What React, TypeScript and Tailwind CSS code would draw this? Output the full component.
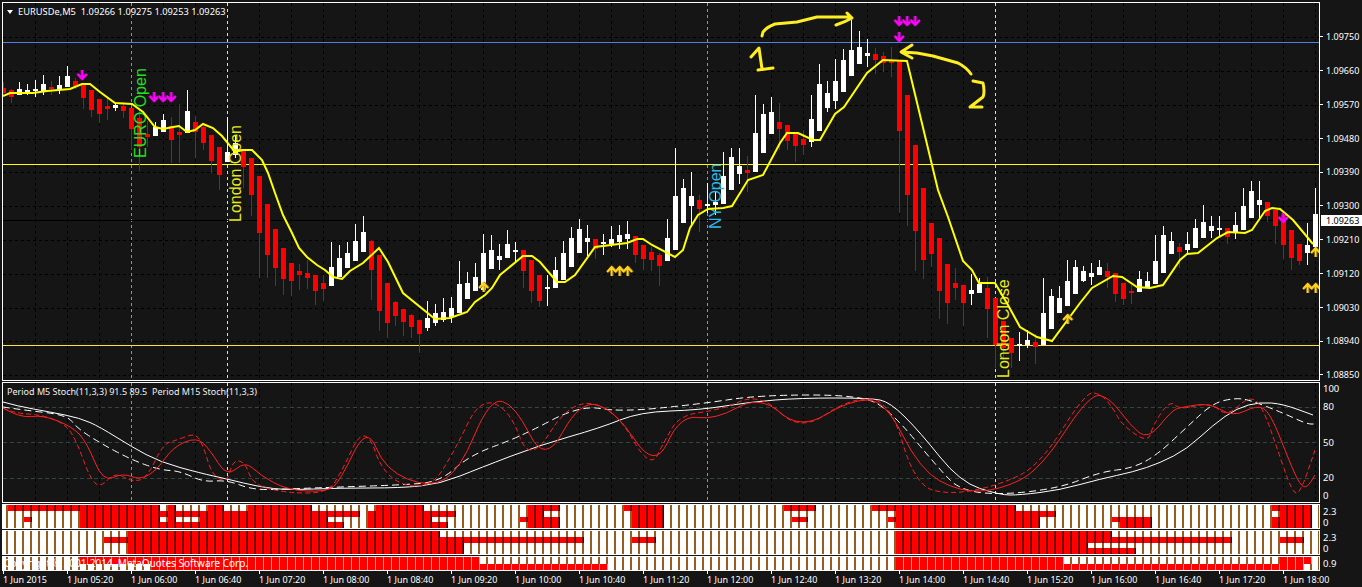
// EURUSD M5 chart, values below are in page pixels
type Candle = [number, number, number, number, number]

const CANDLES: Candle[] = [
  [82, 88, 93, 96, 0], [89, 90, 97, 103, 0], [82, 89, 95, 95, 1], [84, 90, 92, 95, 1], [80, 89, 91, 97, 1],
  [75, 84, 92, 95, 1], [81, 87, 89, 95, 0], [76, 85, 89, 94, 1], [66, 76, 87, 87, 1], [78, 81, 86, 89, 0],
  [84, 84, 98, 109, 0], [90, 90, 110, 117, 0], [99, 99, 114, 123, 0], [98, 106, 109, 120, 0], [104, 105, 108, 111, 1],
  [102, 106, 111, 118, 0], [108, 108, 129, 150, 0], [110, 118, 147, 171, 0], [121, 134, 137, 147, 0], [122, 127, 136, 136, 1],
  [114, 120, 132, 132, 1], [117, 126, 140, 163, 0], [104, 132, 135, 163, 0], [90, 111, 133, 133, 1], [116, 122, 132, 158, 0],
  [126, 127, 143, 150, 0], [135, 135, 161, 173, 0], [147, 147, 175, 190, 0], [117, 152, 162, 162, 1], [135, 143, 155, 158, 1],
  [150, 151, 167, 188, 0], [158, 158, 195, 216, 0], [176, 176, 233, 278, 0], [204, 204, 255, 278, 0], [229, 229, 268, 286, 0],
  [248, 248, 279, 295, 0], [263, 263, 281, 296, 0], [264, 271, 275, 290, 0], [260, 273, 278, 289, 0], [275, 275, 291, 305, 0],
  [275, 283, 289, 301, 0], [242, 267, 286, 286, 1], [245, 258, 277, 277, 1], [242, 253, 268, 268, 1], [224, 241, 261, 261, 1],
  [216, 232, 252, 252, 1], [240, 241, 270, 300, 0], [255, 255, 311, 331, 0], [283, 283, 323, 338, 0], [301, 302, 316, 326, 0],
  [309, 309, 322, 336, 0], [314, 315, 327, 338, 0], [320, 320, 334, 353, 0], [301, 318, 328, 331, 1], [304, 313, 323, 326, 1],
  [298, 312, 320, 322, 1], [297, 308, 317, 323, 1], [261, 284, 313, 313, 1], [272, 283, 299, 299, 1], [263, 277, 291, 291, 1],
  [234, 253, 290, 290, 1], [235, 250, 269, 269, 1], [244, 256, 260, 270, 1], [230, 244, 258, 258, 1], [242, 250, 252, 262, 1],
  [250, 250, 271, 288, 0], [260, 260, 291, 303, 0], [275, 275, 301, 307, 0], [275, 287, 289, 306, 1], [257, 270, 288, 288, 1],
  [241, 253, 280, 280, 1], [227, 238, 267, 267, 1], [219, 229, 253, 253, 1], [225, 238, 242, 256, 1], [239, 239, 249, 259, 0],
  [234, 242, 244, 255, 1], [226, 239, 244, 247, 1], [225, 235, 242, 249, 1], [221, 234, 239, 249, 1], [236, 236, 255, 263, 0],
  [245, 245, 259, 270, 0], [247, 252, 260, 271, 0], [253, 255, 266, 286, 0], [219, 238, 261, 261, 1], [148, 196, 250, 250, 1],
  [179, 188, 223, 223, 1], [172, 196, 206, 225, 1], [195, 200, 209, 232, 0], [183, 204, 206, 213, 1], [192, 202, 205, 215, 1],
  [152, 176, 204, 204, 1], [148, 157, 190, 190, 1], [148, 166, 174, 184, 1], [156, 170, 173, 192, 0], [95, 133, 172, 172, 1],
  [104, 114, 153, 153, 1], [97, 112, 134, 134, 1], [103, 122, 129, 150, 0], [125, 125, 141, 150, 0], [133, 133, 146, 162, 0],
  [130, 139, 145, 155, 0], [95, 119, 142, 147, 1], [64, 84, 131, 131, 1], [81, 93, 108, 112, 1], [59, 81, 101, 109, 1],
  [49, 60, 92, 92, 1], [20, 50, 76, 76, 1], [31, 47, 64, 64, 1], [39, 53, 56, 67, 1], [48, 54, 60, 74, 0],
  [52, 56, 63, 72, 0], [47, 60, 63, 77, 0], [61, 61, 131, 213, 0], [95, 95, 195, 226, 0], [145, 145, 231, 271, 0],
  [188, 188, 260, 279, 0], [223, 223, 254, 267, 0], [238, 238, 291, 319, 0], [264, 264, 303, 324, 0], [268, 283, 288, 300, 0],
  [285, 285, 303, 326, 0], [274, 290, 294, 305, 1], [278, 284, 293, 293, 1], [277, 288, 309, 338, 0], [298, 298, 345, 368, 0],
  [321, 321, 348, 360, 0], [338, 338, 353, 368, 0], [332, 344, 345, 361, 1], [330, 340, 345, 348, 1], [334, 342, 347, 364, 0],
  [278, 313, 345, 345, 1], [289, 296, 329, 329, 1], [286, 298, 313, 313, 1], [260, 281, 306, 306, 1], [260, 267, 294, 294, 1],
  [266, 271, 281, 282, 1], [263, 273, 277, 285, 1], [260, 267, 275, 275, 1], [263, 271, 277, 288, 0], [273, 273, 294, 302, 0],
  [283, 283, 299, 305, 0], [285, 291, 293, 304, 0], [271, 279, 292, 292, 1], [272, 281, 287, 288, 1], [235, 261, 284, 284, 1],
  [226, 235, 273, 273, 1], [232, 241, 254, 254, 1], [243, 247, 252, 268, 0], [232, 244, 250, 255, 1], [219, 228, 248, 248, 1],
  [205, 222, 238, 238, 1], [216, 226, 231, 238, 1], [216, 228, 229, 237, 1], [228, 228, 237, 244, 0], [212, 225, 232, 239, 1],
  [188, 206, 230, 230, 1], [181, 191, 218, 218, 1], [181, 200, 205, 220, 1], [202, 202, 216, 222, 0], [210, 210, 226, 244, 0],
  [215, 215, 245, 259, 0], [230, 230, 258, 270, 0], [244, 244, 261, 265, 0], [223, 245, 253, 265, 1], [188, 214, 247, 247, 1],
]

const MA =
  '3,96 10,93 33,93 47,91 70,89 82,84 90,84 100,92 115,103 132,104 143,112 155,127 163,129 173,127 179,126 187,132 195,130 203,124 213,128 222,136 235,152 243,150 252,150 262,160 268,173 275,193 283,215 292,233 299,248 307,257 317,265 325,270 333,277 342,279 350,271 363,263 379,248 388,262 403,293 435,319 450,318 467,312 475,302 485,295 492,288 500,275 523,256 532,256 540,262 557,282 565,282 575,275 595,247 627,243 637,239 643,239 652,245 675,257 683,250 690,228 698,215 708,209 723,208 732,206 748,180 763,175 780,143 787,133 798,133 813,140 820,140 835,114 844,107 867,73 883,60 907,61 938,190 948,217 963,261 972,270 979,283 995,283 1008,305 1020,327 1037,337 1052,341 1080,303 1092,288 1113,276 1122,277 1137,287 1150,288 1163,285 1180,260 1187,254 1198,253 1217,238 1228,232 1245,233 1252,230 1265,211 1272,208 1280,209 1293,220 1313,244'

const WHITE_K =
  '3,402 17,406 50,412 80,418 100,427 132,447 160,462 200,473 227,479 260,487 287,490 340,488 400,488 440,484 480,468 540,445 600,428 640,412 700,410 750,402 800,398 870,398 890,402 920,432 960,482 1000,495 1020,495 1060,490 1100,479 1133,472 1160,463 1187,449 1213,425 1237,408 1260,402 1283,404 1313,415'
const WHITE_D =
  '3,407 23,410 67,415 77,428 100,443 132,460 160,470 180,471 203,482 227,480 253,490 287,489 340,487 400,485 440,482 470,455 520,437 580,405 620,412 700,404 760,395 860,395 890,410 940,470 960,490 1000,495 1060,488 1100,472 1133,468 1157,455 1187,427 1213,403 1235,398 1250,400 1283,413 1307,424 1315,424'
const RED_K =
  '3,408 20,418 43,415 73,427 87,443 103,482 123,473 140,480 157,470 173,447 197,437 210,450 227,477 245,461 260,475 287,490 327,492 340,481 367,425 385,470 430,488 460,470 490,398 515,405 545,465 580,400 615,410 655,470 680,415 715,420 760,395 800,430 850,400 885,400 920,470 960,492 1000,490 1040,470 1090,393 1110,398 1130,425 1148,440 1172,410 1183,407 1210,403 1233,417 1257,405 1270,412 1290,463 1300,485 1307,488 1315,475'
const RED_D =
  '3,408 13,413 43,415 67,425 78,445 90,478 100,488 115,472 132,482 147,478 163,444 177,440 195,433 203,445 212,475 227,483 233,460 245,462 253,485 287,493 327,493 340,475 365,422 385,480 430,490 455,450 480,398 510,410 530,465 570,400 615,408 650,470 665,440 680,415 720,410 760,393 800,432 850,398 890,400 915,485 950,495 1000,485 1040,465 1085,393 1100,393 1113,408 1122,425 1148,443 1153,425 1170,400 1180,410 1210,402 1227,417 1250,395 1263,408 1277,448 1292,492 1300,494 1315,450'

const R = 'RRRR'
const W = 'WWWW'
const T = 'WRRR'
const S = 'WRWR'
type Run = [number, number, string]

const STRIP_1: Run[] = [
  [0, 0, W], [1, 2, 'RWWW'], [3, 3, 'RWRW'], [4, 9, 'RWWW'], [10, 19, R], [20, 20, S], [21, 21, R], [22, 24, S], [25, 25, T],
  [26, 27, R], [28, 30, T], [31, 38, R], [39, 40, T], [41, 42, S], [43, 44, 'WRWW'], [45, 45, W], [46, 46, T], [47, 52, R],
  [53, 53, T], [54, 55, S], [56, 56, 'WRWW'], [57, 64, W], [65, 65, 'WWRW'], [66, 67, R], [68, 69, 'RWRR'], [70, 77, W],
  [78, 78, 'RWWW'], [79, 82, R], [83, 97, W], [98, 98, 'RWWW'], [99, 100, 'RWRW'], [101, 101, 'RWWW'], [102, 108, W],
  [109, 110, 'RWWW'], [111, 111, 'RWRW'], [112, 126, R], [127, 129, T], [130, 131, 'WRWW'], [132, 138, W], [139, 139, 'WWRW'],
  [140, 143, 'WWRR'], [144, 158, W], [159, 159, 'RWRR'], [160, 163, R], [164, 164, W],
]
const STRIP_2: Run[] = [
  [0, 12, W], [13, 15, 'WRWW'], [16, 54, R], [55, 57, T], [58, 72, 'WRWW'], [73, 78, W], [79, 81, 'WRWW'], [82, 111, W],
  [112, 135, R], [136, 138, 'RRWR'], [139, 141, S], [142, 153, 'WRWW'], [154, 159, W], [160, 162, 'WRWW'], [163, 164, W],
]
const STRIP_3: Run[] = [
  [0, 9, 'WW'], [10, 18, 'RW'], [19, 59, 'RR'], [60, 75, 'WR'], [76, 111, 'WW'], [112, 132, 'RR'], [133, 159, 'WR'],
  [160, 162, 'RR'], [163, 163, 'RW'], [164, 164, 'WW'],
]

const PRICES = ['1.09750', '1.09660', '1.09570', '1.09480', '1.09390', '1.09300', '1.09210', '1.09120', '1.09030', '1.08940', '1.08850']
const TIMES = ['1 Jun 2015', '1 Jun 05:20', '1 Jun 06:00', '1 Jun 06:40', '1 Jun 07:20', '1 Jun 08:00', '1 Jun 08:40', '1 Jun 09:20', '1 Jun 10:00', '1 Jun 10:40', '1 Jun 11:20', '1 Jun 12:00', '1 Jun 12:40', '1 Jun 13:20', '1 Jun 14:00', '1 Jun 14:40', '1 Jun 15:20', '1 Jun 16:00', '1 Jun 16:40', '1 Jun 17:20', '1 Jun 18:00']
const SESSIONS = [
  { x: 131, color: '#22dd22' },
  { x: 227, color: '#ffe84a' },
  { x: 707, color: '#2bb8e8' },
  { x: 995, color: '#ffe84a' },
]

const gridX = Array.from({ length: 41 }, (_, i) => 35 + i * 32)

// rounds the corners of a point list, the stochastic lines are curves
function smooth(points: string) {
  const pts = points.split(' ').map((p) => p.split(',').map(Number))
  let d = `M${pts[0][0]} ${pts[0][1]}`
  for (let i = 1; i < pts.length - 1; i++) {
    const mx = (pts[i][0] + pts[i + 1][0]) / 2
    const my = (pts[i][1] + pts[i + 1][1]) / 2
    d += ` Q${pts[i][0]} ${pts[i][1]} ${mx} ${my}`
  }
  const last = pts[pts.length - 1]
  return `${d} L${last[0]} ${last[1]}`
}

function VGrid({ y1, y2 }: { y1: number; y2: number }) {
  return (
    <g stroke="#000" strokeDasharray="3 3" shapeRendering="crispEdges">
      {gridX.map((x) => (
        <line key={x} x1={x + 0.5} x2={x + 0.5} y1={y1} y2={y2} />
      ))}
    </g>
  )
}

function SessionLines({ y1, y2 }: { y1: number; y2: number }) {
  return (
    <g strokeDasharray="3 3" shapeRendering="crispEdges">
      {SESSIONS.map((s) => (
        <line key={s.x} x1={s.x + 0.5} x2={s.x + 0.5} y1={y1} y2={y2} stroke={s.color} />
      ))}
    </g>
  )
}

function DownArrow({ x, y }: { x: number; y: number }) {
  return (
    <g fill="none" strokeWidth="2">
      <path d={`M${x + 0.5} ${y} V${y + 9} M${x - 4} ${y + 4} L${x + 0.5} ${y + 9} L${x + 5} ${y + 4}`} stroke="#a0109a" transform="translate(-1 0)" />
      <path d={`M${x + 0.5} ${y} V${y + 9} M${x - 4} ${y + 4} L${x + 0.5} ${y + 9} L${x + 5} ${y + 4}`} stroke="#ff00ff" />
    </g>
  )
}

function UpArrow({ x, y }: { x: number; y: number }) {
  return (
    <g fill="none" strokeWidth="2">
      <path d={`M${x + 0.5} ${y + 9} V${y} M${x - 4} ${y + 5} L${x + 0.5} ${y} L${x + 5} ${y + 5}`} stroke="#8a6a10" transform="translate(1 0)" />
      <path d={`M${x + 0.5} ${y + 9} V${y} M${x - 4} ${y + 5} L${x + 0.5} ${y} L${x + 5} ${y + 5}`} stroke="#ffd21e" />
    </g>
  )
}

function SessionLabel({ x, y, color, children }: { x: number; y: number; color: string; children: string }) {
  return (
    <text transform={`translate(${x} ${y}) rotate(-90)`} fill={color} className="font-['Liberation_Sans',sans-serif] text-[16px]">
      {children}
    </text>
  )
}

function MainChart() {
  return (
    <svg viewBox="3 3 1316 377" width="1316" height="377" className="block">
      <VGrid y1={3} y2={380} />
      <g stroke="#000" strokeDasharray="3 3" shapeRendering="crispEdges">
        {[37, 71, 105, 139, 172, 206, 240, 274, 308, 341, 375].map((y) => (
          <line key={y} x1={3} x2={1319} y1={y + 0.5} y2={y + 0.5} />
        ))}
      </g>
      <SessionLines y1={3} y2={380} />
      <g shapeRendering="crispEdges">
        <line x1={3} x2={1319} y1={42.5} y2={42.5} stroke="#4d80e0" />
        <line x1={3} x2={1319} y1={164.5} y2={164.5} stroke="#ffff00" />
        <line x1={3} x2={1319} y1={220.5} y2={220.5} stroke="#000" />
        <line x1={3} x2={1319} y1={345.5} y2={345.5} stroke="#ffe040" />
        {CANDLES.map(([wt, bt, bb, wb, up], i) => {
          const x = 3 + i * 8
          const fill = up ? '#ffffff' : '#ff0000'
          return (
            <g key={i} fill={fill}>
              <rect x={x} y={wt} width={1} height={wb - wt} fill={up ? '#ffffff' : '#d40000'} />
              <rect x={x - 2} y={bt} width={5} height={Math.max(bb - bt, 2)} />
            </g>
          )
        })}
      </g>
      <SessionLabel x={146} y={158} color="#22e022">EURO Open</SessionLabel>
      <SessionLabel x={241} y={222} color="#e8e81e">London Open</SessionLabel>
      <SessionLabel x={721} y={229} color="#2bb8e8">NY Open</SessionLabel>
      <SessionLabel x={1009} y={378} color="#e8e81e">London Close</SessionLabel>
      <polyline points={MA} fill="none" stroke="#ffff00" strokeWidth="2" />
      <DownArrow x={82} y={70} />
      <DownArrow x={154} y={92} />
      <DownArrow x={163} y={92} />
      <DownArrow x={171} y={92} />
      <DownArrow x={899} y={16} />
      <DownArrow x={907} y={16} />
      <DownArrow x={915} y={16} />
      <DownArrow x={899} y={32} />
      <DownArrow x={1283} y={213} />
      <UpArrow x={483} y={283} />
      <UpArrow x={611} y={267} />
      <UpArrow x={619} y={267} />
      <UpArrow x={627} y={267} />
      <UpArrow x={1067} y={315} />
      <UpArrow x={1315} y={248} />
      <UpArrow x={1307} y={284} />
      <UpArrow x={1315} y={284} />
      {/* hand drawn notes */}
      <g fill="none" stroke="#ffee22" strokeWidth="3" strokeLinecap="round" strokeLinejoin="round">
        <path d="M762 36 L763 32 Q767 27 775 24 L797 22 L817 17 L851 17 M847 13 L852 18 Q845 22 836 25" />
        <path d="M751 57 L759 48 L762 69 M758 70 L773 68" />
        <path d="M971 74 Q966 67 958 63 L933 56 L917 53 L902 52 M912 45 L901 52 L912 58" />
        <path d="M973 81 L983 83 Q985 92 983 97 L970 107 L982 107" />
      </g>
    </svg>
  )
}

function StochChart() {
  return (
    <svg viewBox="3 383 1316 119" width="1316" height="119" className="block">
      <VGrid y1={383} y2={502} />
      <g stroke="#33453f" strokeDasharray="4 3" shapeRendering="crispEdges">
        {[407, 442, 478].map((y) => (
          <line key={y} x1={3} x2={1319} y1={y + 0.5} y2={y + 0.5} />
        ))}
      </g>
      <SessionLines y1={383} y2={502} />
      <path d={smooth(WHITE_K)} fill="none" stroke="#ffffff" />
      <path d={smooth(WHITE_D)} fill="none" stroke="#ffffff" strokeDasharray="7 4" />
      <path d={smooth(RED_K)} fill="none" stroke="#ff2020" />
      <path d={smooth(RED_D)} fill="none" stroke="#ff2020" strokeDasharray="5 3" />
    </svg>
  )
}

function Strip({ runs, top, height, lightGaps }: { runs: Run[]; top: number; height: number; lightGaps?: boolean }) {
  const cells: React.ReactNode[] = []
  runs.forEach(([from, to, pattern]) => {
    for (let k = from; k <= to; k++) {
      const x = 3 + k * 8
      const band = height / pattern.length
      pattern.split('').forEach((c, b) => {
        const y = top + b * band
        const red = c === 'R'
        cells.push(
          <g key={`${k}-${b}`}>
            <rect x={x - 3} y={y} width={6} height={band} fill={red ? '#ff0000' : '#ffffff'} />
            <rect x={x + 3} y={y} width={1} height={band} fill={red ? (lightGaps ? '#ff0000' : '#8a0000') : '#96591e'} />
            <rect x={x + 4} y={y} width={1} height={band} fill={red ? (lightGaps ? '#c9b0b0' : '#000000') : '#3f6fb0'} />
          </g>
        )
      })
    }
  })
  return (
    <svg viewBox={`3 ${top} 1316 ${height}`} width="1316" height={height} className="block" shapeRendering="crispEdges">
      {cells}
    </svg>
  )
}

function AxisRow({ label, className }: { label: string; className: string }) {
  return <div className={`flex items-center pl-[3px] text-[9.5px] leading-none ${className}`}>{label}</div>
}

export default function App() {
  return (
    <div className="w-[1362px] h-[587px] overflow-hidden bg-[#151515] pt-[2px] pl-[2px] text-white font-['Noto_Sans',sans-serif] text-[9px]">
      {/* main chart */}
      <div className="flex h-[379px]">
        <div className="relative w-[1318px] h-[379px] border border-white overflow-hidden">
          <MainChart />
          <div className="absolute left-[4px] top-[3px] flex items-center gap-[5px] whitespace-pre text-[9.3px] leading-[12px]">
            <span className="w-0 h-0 border-x-[3.5px] border-x-transparent border-t-[4px] border-t-white" />
            <span>EURUSDe,M5  1.09266 1.09275 1.09253 1.09263</span>
          </div>
        </div>
        <div className="relative w-[42px] h-[379px] pt-[18px]">
          {PRICES.map((p) => (
            <div key={p} className="flex items-center h-[33.8px] gap-[3px]">
              <span className="w-[3px] h-px bg-white" />
              <span>{p}</span>
            </div>
          ))}
          <div className="absolute left-[1px] top-[213px] w-[41px] h-[11px] pl-[5px] bg-white text-black leading-[11px]">1.09263</div>
        </div>
      </div>

      {/* stochastic */}
      <div className="flex mt-px">
        <div className="relative w-[1318px] h-[121px] border border-white overflow-hidden">
          <StochChart />
          <div className="absolute left-[4px] top-[3px] whitespace-pre leading-[12px] text-[#f0f0f0]">
            Period M5 Stoch(11,3,3) 91.5 89.5  Period M15 Stoch(11,3,3)
          </div>
        </div>
        <div className="w-[42px] pt-[1px]">
          <AxisRow label="100" className="h-[12px]" />
          <AxisRow label="80" className="h-[24px]" />
          <AxisRow label="50" className="h-[47px]" />
          <AxisRow label="20" className="h-[24px]" />
          <AxisRow label="0" className="h-[12px]" />
        </div>
      </div>

      {/* signal strips */}
      <div className="flex mt-px">
        <div className="w-[1318px] h-[25px] border border-white overflow-hidden">
          <Strip runs={STRIP_1} top={505} height={23} />
        </div>
        <div className="w-[42px] pt-[2px]">
          <AxisRow label="2.3" className="h-[12px]" />
          <AxisRow label="0" className="h-[9px]" />
        </div>
      </div>
      <div className="flex mt-px">
        <div className="w-[1318px] h-[25px] border border-white overflow-hidden">
          <Strip runs={STRIP_2} top={531} height={23} />
        </div>
        <div className="w-[42px] pt-[2px]">
          <AxisRow label="2.3" className="h-[12px]" />
          <AxisRow label="0" className="h-[9px]" />
        </div>
      </div>
      <div className="flex mt-px">
        <div className="relative w-[1318px] h-[15px] border border-white overflow-hidden">
          <Strip runs={STRIP_3} top={557} height={13} lightGaps />
          <div className="absolute left-[1px] top-[0px] whitespace-pre text-[10px] leading-[12px] text-white">
            Copyright © 2001-2014, MetaQuotes Software Corp.
          </div>
        </div>
        <div className="w-[42px]">
          <AxisRow label="0.9" className="h-[15px]" />
        </div>
      </div>

      {/* time axis */}
      <div className="flex pl-[1px]">
        {TIMES.map((t) => (
          <div key={t} className="flex flex-col w-[64px] shrink-0 leading-[12px]">
            <span className="w-px h-[3px] bg-white" />
            <span className="whitespace-pre">{t}</span>
          </div>
        ))}
      </div>
    </div>
  )
}
